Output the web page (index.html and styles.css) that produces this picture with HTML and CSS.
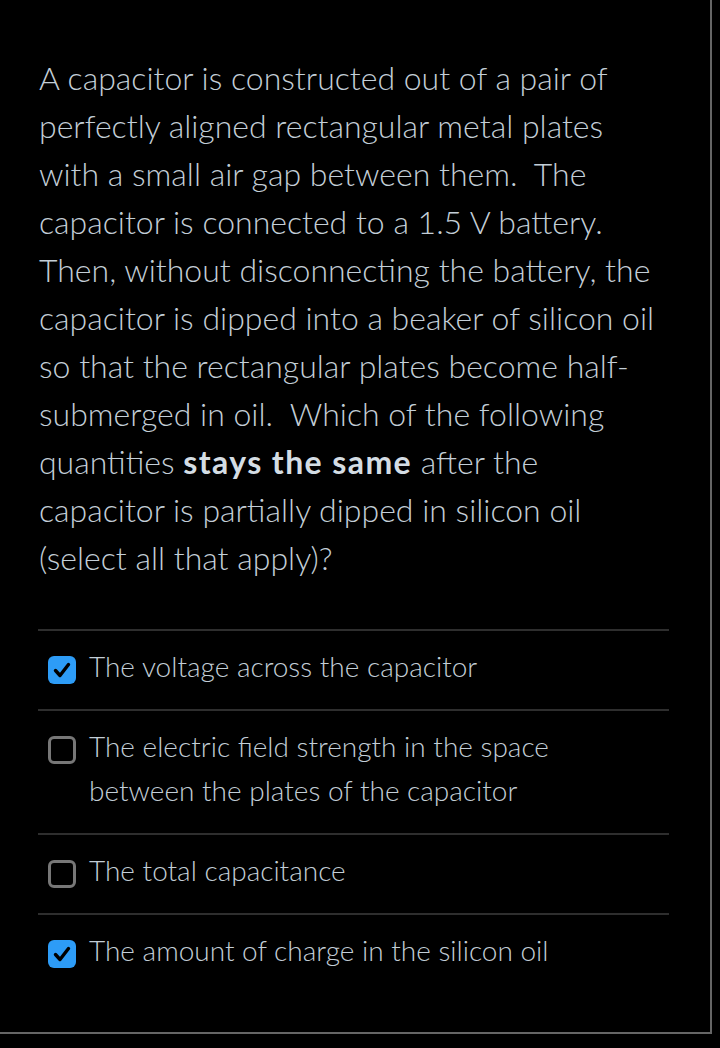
FILE: index.html
```html
<!DOCTYPE html>
<html>
<head>
<meta charset="utf-8">
<link rel="stylesheet" href="styles.css">
</head>
<body>
<div class="frame">
  <div class="content">
    <p class="question">A capacitor is constructed out of a pair of perfectly aligned rectangular metal plates with a small air gap between them.&nbsp; The capacitor is connected to a 1.5 V battery.&nbsp; Then, without disconnecting the battery, the capacitor is dipped into a beaker of silicon oil so that the rectangular plates become half-submerged in oil.&nbsp; Which of the following quantities <strong>stays the same</strong> after the capacitor is partially dipped in silicon oil (select all that apply)?</p>
    <ul class="options">
      <li class="option">
        <span class="box checked"><svg viewBox="0 0 28 28" width="28" height="28"><path d="M7.5 14.5 L12 19.5 L20.5 8.5" fill="none" stroke="#000" stroke-width="3.4" stroke-linecap="round" stroke-linejoin="round"/></svg></span>
        <span class="label">The voltage across the capacitor</span>
      </li>
      <li class="option">
        <span class="box"></span>
        <span class="label">The electric field strength in the space between the plates of the capacitor</span>
      </li>
      <li class="option">
        <span class="box"></span>
        <span class="label">The total capacitance</span>
      </li>
      <li class="option">
        <span class="box checked"><svg viewBox="0 0 28 28" width="28" height="28"><path d="M7.5 14.5 L12 19.5 L20.5 8.5" fill="none" stroke="#000" stroke-width="3.4" stroke-linecap="round" stroke-linejoin="round"/></svg></span>
        <span class="label">The amount of charge in the silicon oil</span>
      </li>
    </ul>
  </div>
</div>
</body>
</html>
```

FILE: styles.css
```css
html, body {
  margin: 0;
  padding: 0;
  background: #000;
}
body {
  width: 720px;
  height: 1048px;
  overflow: hidden;
  font-family: Lato, "Open Sans", sans-serif;
}
.frame {
  width: 710px;
  height: 1032px;
  border-right: 2px solid #666;
  border-bottom: 2px solid #666;
  box-sizing: content-box;
}
.content {
  padding: 54px 51px 0 38px;
}
.question {
  margin: 0;
  padding: 0 4px 0 1px;
  font-size: 32px;
  font-weight: 300;
  line-height: 48px;
  color: #c3ced7;
}
.question strong {
  font-weight: 700;
  letter-spacing: 1.4px;
  color: #d4dde4;
}
.options {
  list-style: none;
  margin: 47px 0 0 0;
  padding: 0;
  width: 631px;
}
.option {
  display: flex;
  align-items: flex-start;
  border-top: 2px solid #2e2e2e;
  padding: 13px 40px 21px 10px;
}
.box {
  flex: none;
  width: 28px;
  height: 28px;
  box-sizing: border-box;
  border: 3px solid #777;
  border-radius: 6px;
  margin-top: 12px;
  margin-right: 13px;
}
.box.checked {
  border: none;
  background: #2d9cf7;
}
.box svg {
  display: block;
}
.label {
  font-size: 28px;
  font-weight: 300;
  line-height: 44px;
  color: #c3ced7;
}
```
